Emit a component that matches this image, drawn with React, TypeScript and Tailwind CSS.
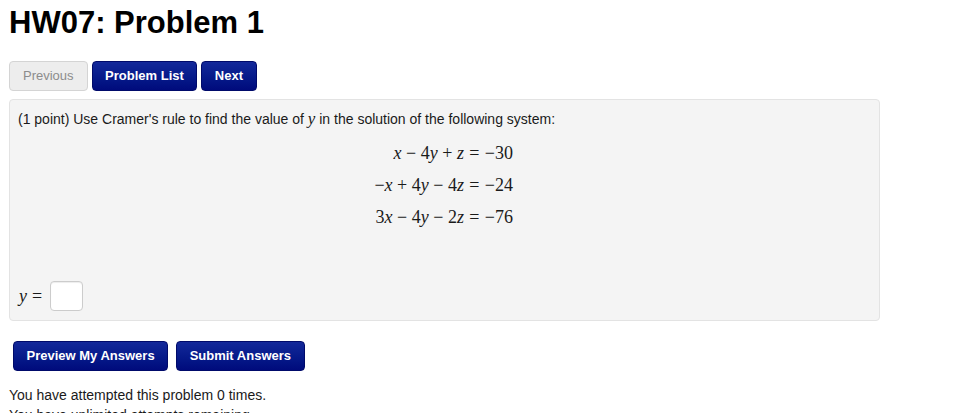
import React from 'react';

const sans = { fontFamily: '"Liberation Sans", Arial, sans-serif' };
const serif = { fontFamily: '"Liberation Serif", "Times New Roman", serif' };

const V = ({ c }: { c: string }) => <span className="italic">{c}</span>;
const Bin = ({ c }: { c: string }) => <span className="mx-[0.25em]">{c}</span>;
const Rel = ({ c }: { c: string }) => <span className="mx-[0.3em]">{c}</span>;

function NavButton({ label, disabled }: { label: string; disabled?: boolean }) {
	return disabled ? (
		<button className="h-[30px] px-[13px] rounded-[4px] border border-[#d4d4d4] bg-[#ededed] text-[13px] text-[#8c8c8c]">
			{label}
		</button>
	) : (
		<button className="h-[30px] px-[12.5px] rounded-[4px] border border-[#000a6a] bg-gradient-to-b from-[#13289a] to-[#000a7c] text-[13px] font-bold text-white">
			{label}
		</button>
	);
}

export default function App() {
	return (
		<div className="min-h-[413px] bg-white pl-[9px] text-[#1a1a1a]" style={sans}>
			<h1 className="mt-[1px] h-[44px] leading-[44px] text-[31px] font-bold text-black">
				HW07: Problem 1
			</h1>

			<div className="mt-[16px] flex gap-[4px]">
				<NavButton label="Previous" disabled />
				<NavButton label="Problem List" />
				<NavButton label="Next" />
			</div>

			<div className="mt-[8px] w-[871px] h-[222px] rounded-[4px] border border-[#e3e3e3] bg-[#f4f4f4] pt-[9px] px-[8px] text-[14px] leading-[20px]">
				<p>
					(1 point) Use Cramer's rule to find the value of{' '}
					<span className="italic text-[17px]" style={serif}>
						y
					</span>{' '}
					in the solution of the following system:
				</p>

				<div className="mt-[8px] flex justify-center text-[18px] leading-[32px]" style={serif}>
					<div className="w-[137px] flex flex-col items-end whitespace-nowrap">
						<div>
							<V c="x" />
							<Bin c="−" />4<V c="y" />
							<Bin c="+" />
							<V c="z" />
							<Rel c="=" />
							−30
						</div>
						<div>
							−<V c="x" />
							<Bin c="+" />4<V c="y" />
							<Bin c="−" />4<V c="z" />
							<Rel c="=" />
							−24
						</div>
						<div>
							3<V c="x" />
							<Bin c="−" />4<V c="y" />
							<Bin c="−" />2<V c="z" />
							<Rel c="=" />
							−76
						</div>
					</div>
				</div>

				<div className="mt-[48px] flex items-center h-[30px]">
					<span className="text-[18px] ml-[1px]" style={serif}>
						<V c="y" />
						<span className="ml-[5px]">=</span>
					</span>
					<input
						className="ml-[8px] w-[33px] h-[30px] rounded-[4px] border border-[#cccccc] bg-white shadow-[inset_0_1px_1px_rgba(0,0,0,0.075)] outline-none"
						type="text"
					/>
				</div>
			</div>

			<div className="mt-[20px] ml-[4px] flex gap-[8px]">
				<NavButton label="Preview My Answers" />
				<NavButton label="Submit Answers" />
			</div>

			<div className="mt-[14px] text-[14px] leading-[20px]">
				<p>You have attempted this problem 0 times.</p>
				<p>You have unlimited attempts remaining.</p>
			</div>
		</div>
	);
}
